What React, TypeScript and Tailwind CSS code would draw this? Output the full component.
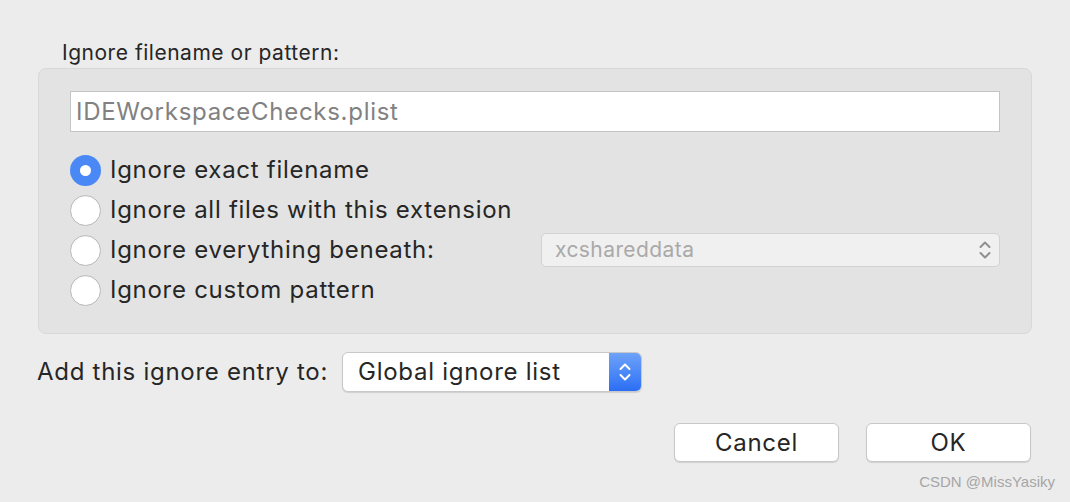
import React from "react";

const font = { fontFamily: "Inter, 'Noto Sans', sans-serif" };

function Radio({ checked, label }: { checked?: boolean; label: string }) {
  return (
    <div className="flex h-10 items-center">
      {checked ? (
        <span className="grid size-[31px] place-items-center rounded-full bg-[#4a89f5]">
          <span className="size-[11px] rounded-full bg-white" />
        </span>
      ) : (
        <span className="size-[31px] rounded-full border border-[#b9b9b9] bg-white shadow-[inset_0_1px_1px_rgba(0,0,0,0.05)]" />
      )}
      <span className="ml-[9px] text-[24px] tracking-[0.03em] text-[#262626]">{label}</span>
    </div>
  );
}

function Chevrons({ color }: { color: string }) {
  return (
    <svg width="14" height="24" viewBox="0 0 14 24" fill="none" stroke={color} strokeWidth="2" strokeLinecap="round" strokeLinejoin="round">
      <path d="M2.5 9 7 4.5 11.5 9" />
      <path d="M2.5 15 7 19.5 11.5 15" />
    </svg>
  );
}

export default function App() {
  return (
    <div className="relative h-[502px] w-[1070px] overflow-hidden bg-[#ececec]" style={font}>
      <div className="pl-[62px] pt-[39px] text-[21px] leading-[27px] tracking-[0.025em] text-[#262626]">Ignore filename or pattern:</div>
      <div className="mx-[38px] mt-[2px] h-[266px] rounded-[8px] border border-[#d8d8d8] bg-[#e3e3e3] px-[31px] pt-[22px]">
        <div className="flex h-[41px] items-center border border-[#c4c4c4] bg-white pl-[5px] text-[24px] tracking-[0.03em] text-[#818181]">IDEWorkspaceChecks.plist</div>
        <div className="mt-[18px] flex flex-col">
          <Radio checked label="Ignore exact filename" />
          <Radio label="Ignore all files with this extension" />
          <div className="flex items-center justify-between">
            <Radio label="Ignore everything beneath:" />
            <div className="flex h-[34px] w-[459px] items-center justify-between rounded-[5px] border border-[#d2d2d2] bg-[#f0f0f0] pl-[13px] pr-[7px] text-[21px] tracking-[0.02em] text-[#a9a9a9]">
              <span>xcshareddata</span>
              <Chevrons color="#8f8f8f" />
            </div>
          </div>
          <Radio label="Ignore custom pattern" />
        </div>
      </div>
      <div className="mt-[18px] flex items-center pl-[37px]">
        <span className="text-[24px] tracking-[0.03em] text-[#262626]">Add this ignore entry to:</span>
        <div className="ml-[14px] flex h-[40px] w-[300px] overflow-hidden rounded-[6px] border border-[#c8c8c8] bg-white shadow-[0_1px_1px_rgba(0,0,0,0.12)]">
          <span className="flex flex-1 items-center pl-[15px] text-[24px] tracking-[0.03em] text-[#262626]">Global ignore list</span>
          <span className="grid w-[32px] place-items-center bg-gradient-to-b from-[#6ea2f8] to-[#2b6ef5]">
            <Chevrons color="#ffffff" />
          </span>
        </div>
      </div>
      <div className="mt-[31px] flex justify-end gap-[27px] pr-[39px]">
        <button className="h-[39px] w-[165px] rounded-[6px] border border-[#c8c8c8] bg-white text-[24px] tracking-[0.03em] text-[#262626] shadow-[0_1px_1px_rgba(0,0,0,0.12)]">Cancel</button>
        <button className="h-[39px] w-[165px] rounded-[6px] border border-[#c8c8c8] bg-white text-[24px] tracking-[0.03em] text-[#262626] shadow-[0_1px_1px_rgba(0,0,0,0.12)]">OK</button>
      </div>
      <div className="absolute bottom-[9px] right-[15px] text-[15px] text-[#a6a6a6]" style={{ fontFamily: "'Liberation Sans', Arial, sans-serif" }}>CSDN @MissYasiky</div>
    </div>
  );
}
